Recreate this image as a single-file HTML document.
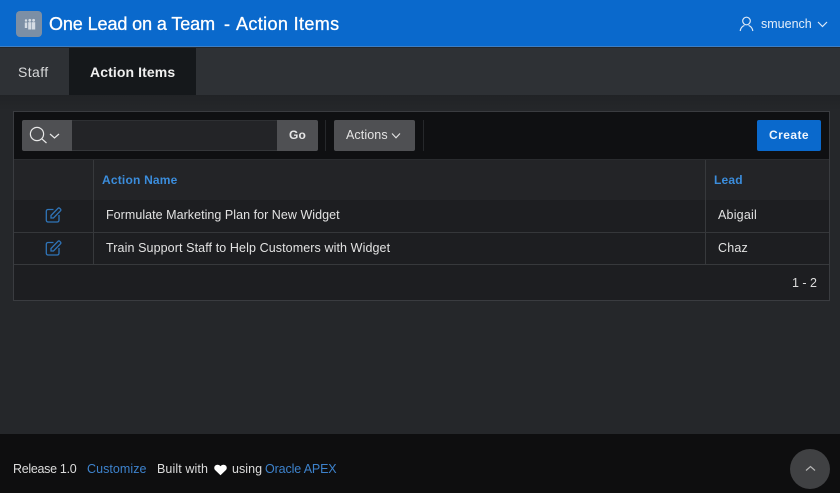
<!DOCTYPE html>
<html><head><meta charset="utf-8"><style>
*{box-sizing:border-box}
html,body{margin:0;padding:0}
body{width:840px;height:493px;position:relative;overflow:hidden;background:#25272a;font-family:"Liberation Sans",sans-serif;color:#e3e3e3}
.a{position:absolute;white-space:nowrap}
.r{font-size:12.5px;line-height:15px;color:#e2e2e2;letter-spacing:.04px}
.t{font-size:18px;line-height:22px;top:13px;color:#fff;-webkit-text-stroke:.3px #fff}
.th{font-size:12px;line-height:15px;top:173px;font-weight:700;color:#3b8ddc;letter-spacing:.2px}
.f{font-size:12.5px;line-height:15px;top:462px;letter-spacing:0}
</style></head><body>
<div class="a" style="left:0;top:0;width:840px;height:47px;background:#0a69cc;border-bottom:1px solid #3f7fc4"></div>
<div class="a" style="left:16px;top:11px;width:26px;height:26px;border-radius:4px;background:#7c8fa5"></div>
<svg class="a" style="left:16px;top:11px" width="26" height="26" viewBox="0 0 26 26" fill="#d5dce4"><circle cx="10" cy="9.500" r="1.200"/><circle cx="13.800" cy="9.300" r="1.400"/><circle cx="17.600" cy="9.300" r="1.400"/><rect x="8.800" y="11.500" width="2.400" height="5.500"/><rect x="12.200" y="11.200" width="3.200" height="7.300"/><rect x="16" y="11.200" width="3.200" height="7.300"/></svg>
<div class="a t" style="left:49px;letter-spacing:-.1px">One Lead on a Team</div>
<div class="a t" style="left:224px">-</div>
<div class="a t" style="left:236px;letter-spacing:.37px">Action Items</div>
<svg class="a" style="left:739px;top:16px" width="15" height="16" viewBox="0 0 15 16" fill="none" stroke="#dce8f6" stroke-width="1.2"><circle cx="7.500" cy="5" r="3.800"/><path d="M1.200 15c.4-3.200 2.600-5 4.200-5.600M13.800 15c-.4-3.200-2.600-5-4.200-5.600"/></svg>
<div class="a" style="left:761px;top:16px;font-size:12.500px;line-height:16px;color:#e4eefa;letter-spacing:0">smuench</div>
<svg class="a" style="left:817px;top:21px" width="11" height="7" viewBox="0 0 11 7" fill="none" stroke="#dce8f6" stroke-width="1.200"><path d="M1 1l4.500 4.500L10 1"/></svg>

<div class="a" style="left:0;top:48px;width:840px;height:47px;background:#2e3135"></div>
<div class="a" style="left:69px;top:48px;width:127px;height:47px;background:#15181b"></div>
<div class="a" style="left:18px;top:63px;font-size:14px;line-height:18px;color:#d8d9da;letter-spacing:.4px">Staff</div>
<div class="a" style="left:90px;top:63px;font-size:14px;line-height:18px;font-weight:700;color:#f0f0f0;letter-spacing:.1px">Action Items</div>

<div class="a" style="left:0;top:95px;width:840px;height:16px;background:linear-gradient(#212326,#25272a)"></div>

<div class="a" style="left:13px;top:111px;width:817px;height:190px;background:#1d1e21;border:1px solid #3a3c40"></div>
<div class="a" style="left:14px;top:112px;width:815px;height:47px;background:#0f1012"></div>
<div class="a" style="left:14px;top:159px;width:815px;height:1px;background:#2a2c2f"></div>
<div class="a" style="left:14px;top:160px;width:815px;height:40px;background:#232427"></div>

<div class="a" style="left:22px;top:120px;width:50px;height:31px;background:#4f5053;border-radius:2px 0 0 2px"></div>
<svg class="a" style="left:28px;top:125px" width="32" height="20" viewBox="0 0 32 20" fill="none" stroke="#e8e8e8" stroke-width="1.200"><circle cx="9" cy="9" r="6.600"/><path d="M13.800 13.800L18.500 18"/><path d="M22 9l4.500 4 4.500-4"/></svg>
<div class="a" style="left:72px;top:120px;width:205px;height:31px;background:#232427;border-top:1px solid #2e3033;border-bottom:1px solid #35373a"></div>
<div class="a" style="left:277px;top:120px;width:41px;height:31px;background:#4f5053;border-radius:0 2px 2px 0"></div>
<div class="a" style="left:277px;top:128px;width:41px;text-align:center;font-size:12px;line-height:15px;font-weight:700;color:#e8e8e8;letter-spacing:.2px">Go</div>
<div class="a" style="left:325px;top:120px;width:1px;height:31px;background:#26282b"></div>
<div class="a" style="left:334px;top:120px;width:81px;height:31px;background:#4f5053;border-radius:2px"></div>
<div class="a" style="left:346px;top:128px;font-size:12.500px;line-height:15px;color:#e4e4e4;letter-spacing:.1px">Actions</div>
<svg class="a" style="left:390px;top:132px" width="12" height="8" viewBox="0 0 12 8" fill="none" stroke="#e4e4e4" stroke-width="1.100"><path d="M2 1.500L6 5.800l4-4.300"/></svg>
<div class="a" style="left:423px;top:120px;width:1px;height:31px;background:#26282b"></div>
<div class="a" style="left:757px;top:120px;width:64px;height:31px;background:#0a69cc;border-radius:2px"></div>
<div class="a" style="left:757px;top:128px;width:64px;text-align:center;font-size:12px;line-height:15px;font-weight:700;color:#f0f6fd;letter-spacing:.45px">Create</div>

<div class="a" style="left:93px;top:160px;width:1px;height:104px;background:#37393c"></div>
<div class="a" style="left:705px;top:160px;width:1px;height:104px;background:#37393c"></div>
<div class="a" style="left:14px;top:232px;width:815px;height:1px;background:#35373a"></div>
<div class="a" style="left:14px;top:264px;width:815px;height:1px;background:#37393c"></div>

<div class="a th" style="left:102px">Action Name</div>
<div class="a th" style="left:714px">Lead</div>

<svg class="a" style="left:45px;top:207px" width="17" height="16" viewBox="0 0 17 16" fill="none" stroke="#2f74b8" stroke-width="1.300"><path d="M8.500 2.500H3A1.700 1.700 0 0 0 1.300 4.200v9.100A1.700 1.700 0 0 0 3 15h9.300a1.700 1.700 0 0 0 1.700-1.700V8"/><path d="M6 8.500L13 1.300c.5-.5 1.200-.5 1.700 0l.8.8c.5.5.5 1.200 0 1.700L8.500 11H6z"/></svg>
<svg class="a" style="left:45px;top:240px" width="17" height="16" viewBox="0 0 17 16" fill="none" stroke="#2f74b8" stroke-width="1.300"><path d="M8.500 2.500H3A1.700 1.700 0 0 0 1.300 4.200v9.100A1.700 1.700 0 0 0 3 15h9.300a1.700 1.700 0 0 0 1.700-1.700V8"/><path d="M6 8.500L13 1.300c.5-.5 1.200-.5 1.700 0l.8.8c.5.5.5 1.200 0 1.700L8.500 11H6z"/></svg>

<div class="a r" style="left:106px;top:208px">Formulate Marketing Plan for New Widget</div>
<div class="a r" style="left:106px;top:241px;letter-spacing:.1px">Train Support Staff to Help Customers with Widget</div>
<div class="a r" style="left:718px;top:208px;letter-spacing:.2px">Abigail</div>
<div class="a r" style="left:718px;top:241px;letter-spacing:.2px">Chaz</div>
<div class="a" style="right:23px;top:276px;font-size:12.500px;line-height:15px;color:#dcdcdc;letter-spacing:0">1 - 2</div>

<div class="a" style="left:0;top:434px;width:840px;height:59px;background:#0e0e0f"></div>
<div class="a f" style="left:13px;color:#dcdcdc;letter-spacing:-.3px">Release 1.0</div>
<div class="a f" style="left:87px;color:#3d82cc;letter-spacing:.05px">Customize</div>
<div class="a f" style="left:157px;color:#dcdcdc;letter-spacing:.1px">Built with</div>
<svg class="a" style="left:214px;top:464px" width="13" height="12" viewBox="0 0 13 12" fill="#fff"><path d="M6.500 11.300L1.300 6.300C-.4 4.600.1 2 1.900 1.100 3.600.3 5.500.8 6.500 2.300 7.500.8 9.400.3 11.100 1.100 12.900 2 13.400 4.600 11.700 6.300z"/></svg>
<div class="a f" style="left:232px;color:#dcdcdc;letter-spacing:.05px">using</div>
<div class="a f" style="left:265px;color:#3d82cc;letter-spacing:-.13px">Oracle APEX</div>
<div class="a" style="left:790px;top:449px;width:40px;height:40px;border-radius:50%;background:#404143"></div>
<svg class="a" style="left:805px;top:465px" width="11" height="7" viewBox="0 0 11 7" fill="none" stroke="#b5b5b5" stroke-width="1.200"><path d="M1 5.500L5.500 1.500 10 5.500"/></svg>
</body></html>
